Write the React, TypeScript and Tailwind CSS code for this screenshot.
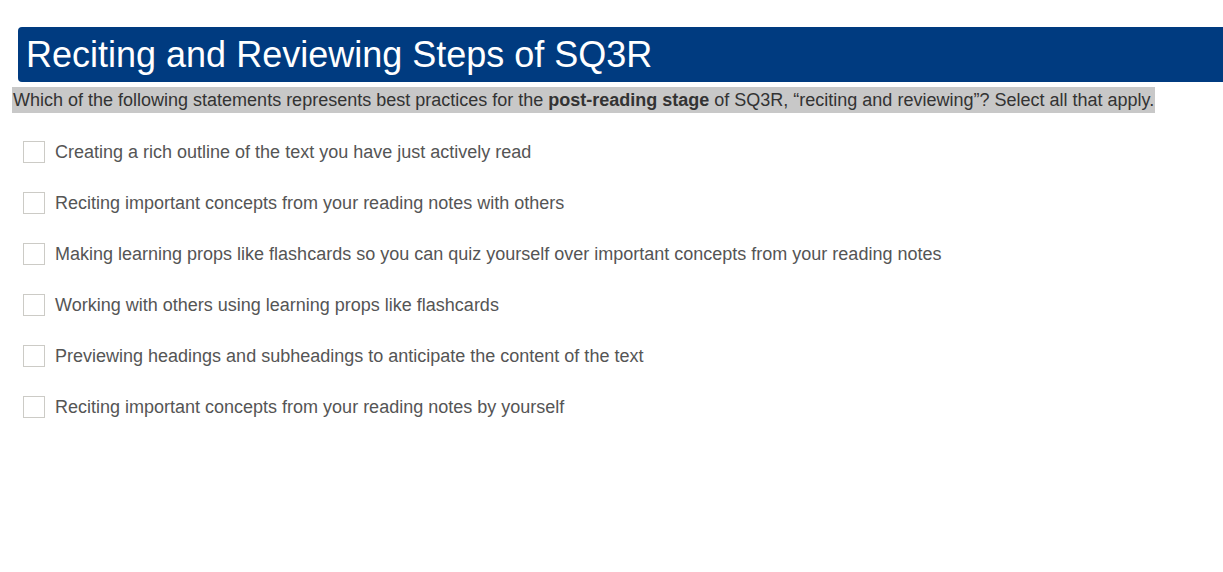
import React from 'react';

const options = [
  'Creating a rich outline of the text you have just actively read',
  'Reciting important concepts from your reading notes with others',
  'Making learning props like flashcards so you can quiz yourself over important concepts from your reading notes',
  'Working with others using learning props like flashcards',
  'Previewing headings and subheadings to anticipate the content of the text',
  'Reciting important concepts from your reading notes by yourself',
];

export default function App() {
  return (
    <div className="min-h-[572px] w-[1223px] overflow-hidden bg-white pt-[27px] font-['Liberation_Sans',Arial,sans-serif]">
      <div className="ml-[18px] flex h-[55px] items-center rounded-l-[4px] bg-[#003b80] pl-[8px]">
        <h1 className="text-[36px] leading-none text-white">Reciting and Reviewing Steps of SQ3R</h1>
      </div>
      <div className="mt-[5px] ml-[12px]">
        <p className="inline-block bg-[#c8c8c8] px-[1px] text-[18px] leading-[26px] text-[#333]">
          Which of the following statements represents best practices for the <b>post-reading stage</b> of SQ3R, “reciting and reviewing”? Select all that apply.
        </p>
      </div>
      <ul className="mt-[28px] ml-[23px] flex flex-col gap-[29px]">
        {options.map((o) => (
          <li key={o} className="flex h-[22px] items-center gap-[10px]">
            <span className="h-[22px] w-[22px] shrink-0 border border-[#cccbc6] bg-white" />
            <span className="text-[18px] text-[#555]">{o}</span>
          </li>
        ))}
      </ul>
    </div>
  );
}
